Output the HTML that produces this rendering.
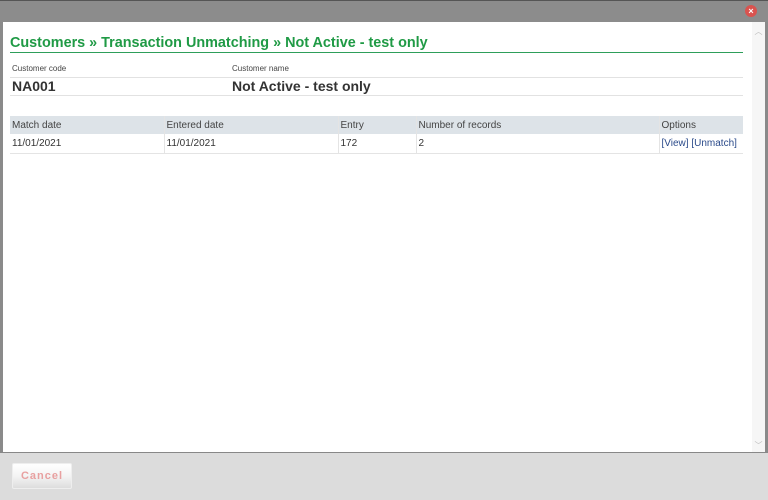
<!DOCTYPE html>
<html><head><style>
*{margin:0;padding:0;box-sizing:border-box}
body{width:768px;height:500px;overflow:hidden;background:#fff;font-family:"Liberation Sans",sans-serif;position:relative}
.top{position:absolute;left:0;top:0;width:768px;height:22px;background:#8c8c8c;border-top:1px solid #555}
.lb{position:absolute;left:0;top:22px;width:3px;height:431px;background:#8a8a8a}
.rb{position:absolute;right:0;top:22px;width:3px;height:431px;background:#8a8a8a}
.sb{position:absolute;left:752px;top:22px;width:13px;height:431px;background:#f6f6f6;color:#bbb;font-size:8px;text-align:center}
.close{position:absolute;left:745px;top:5px;width:12px;height:12px;border-radius:50%;background:#d9534f;color:#fff;font-size:9px;line-height:12px;text-align:center;font-weight:bold}
.title{position:absolute;left:10px;top:35px;font-size:14.4px;font-weight:bold;color:#1f9a45;white-space:nowrap}
.gl{position:absolute;left:10px;top:52px;width:733px;height:1px;background:#2e9e5a}
.lab{position:absolute;top:64px;font-size:8px;color:#444}
.l{position:absolute;left:10px;width:733px;height:1px;background:#e2e2e2}
.val{position:absolute;top:78px;font-size:14px;font-weight:bold;color:#333}
table{position:absolute;left:10px;top:116px;width:733px;border-collapse:collapse;font-size:10px;color:#333}
td{height:18px;padding:1px 2px 0;border-right:1px solid #e4e4e4;white-space:nowrap}
tr.h td{background:#dde3e8;color:#444}
tr.r td{border-bottom:1px solid #e4e4e4;height:19px}
a{color:#2a4a8a;text-decoration:none}
.foot{position:absolute;left:0;top:452px;width:768px;height:48px;background:#dcdcdc;border-top:1px solid #888}
.btn{position:absolute;left:12px;top:10px;width:60px;height:26px;background:linear-gradient(#fff,#f4f4f4 50%,#ddd);border:1px solid #eee;border-radius:2px;color:#e8a0a0;font-size:11px;font-weight:bold;letter-spacing:1px;text-align:center;line-height:24px}
</style></head><body>
<div class="top"></div>
<div class="close">×</div>
<div class="lb"></div><div class="rb"></div>
<div class="sb"><div style="margin-top:4px">︿</div><div style="position:absolute;bottom:2px;width:13px">﹀</div></div>
<div class="title">Customers » Transaction Unmatching » Not Active - test only</div>
<div class="gl"></div>
<div class="lab" style="left:12px">Customer code</div>
<div class="lab" style="left:232px">Customer name</div>
<div class="l" style="top:77px"></div>
<div class="val" style="left:12px">NA001</div>
<div class="val" style="left:232px">Not Active - test only</div>
<div class="l" style="top:95px"></div>
<table>
<tr class="h"><td style="width:154px">Match date</td><td style="width:174px">Entered date</td><td style="width:78px">Entry</td><td style="width:243px">Number of records</td><td style="border-right:none">Options</td></tr>
<tr class="r"><td>11/01/2021</td><td>11/01/2021</td><td>172</td><td>2</td><td style="border-right:none"><a>[View]</a> <a>[Unmatch]</a></td></tr>
</table>
<div class="foot"><div class="btn">Cancel</div></div>
</body></html>
